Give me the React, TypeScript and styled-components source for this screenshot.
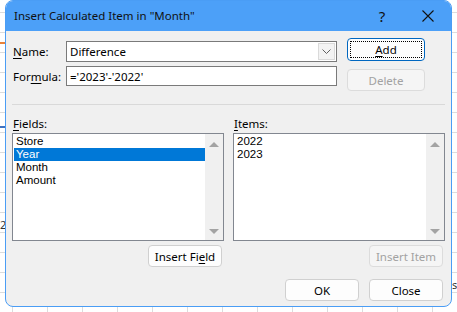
import React from "react";
import styled, { createGlobalStyle } from "styled-components";

const FONT = `"Noto Sans", "Open Sans", "Liberation Sans", sans-serif`;
const LIST_FONT = `"Liberation Sans", Arial, sans-serif`;

const GlobalStyle = createGlobalStyle`
  html, body { margin: 0; padding: 0; }
  body {
    width: 457px;
    height: 312px;
    overflow: hidden;
    font-family: ${FONT};
    font-size: 11.5px;
    color: #000;
  }
  * { box-sizing: border-box; }
`;

const Desktop = styled.div`
  position: relative;
  width: 457px;
  height: 312px;
  padding: 0 5px;
  background-color: #ffffff;
  background-image:
    linear-gradient(#dcdcdc 1px, transparent 1px),
    linear-gradient(90deg, #dcdcdc 1px, transparent 1px);
  background-size: 100% 20px, 35px 100%;
  background-position: 0 12px, 12px 0;
`;

const ChartStroke = styled.div<{ $color: string; $top: number }>`
  position: absolute;
  left: 0;
  top: ${(p) => p.$top}px;
  width: 6px;
  height: 2px;
  background: ${(p) => p.$color};
`;

const SheetText = styled.span<{ $left: number; $top: number }>`
  position: absolute;
  left: ${(p) => p.$left}px;
  top: ${(p) => p.$top}px;
  font-size: 11px;
  color: #333;
  line-height: 12px;
`;

const Dialog = styled.div`
  position: relative;
  width: 447px;
  height: 307px;
  border: 1px solid #4a9df5;
  border-radius: 8px;
  overflow: hidden;
  background: #f0f0f0;
  display: flex;
  flex-direction: column;
`;

const TitleBar = styled.div`
  height: 30px;
  flex: none;
  background: #4ca0f8;
  display: flex;
  align-items: center;
  padding-left: 8px;
  padding-bottom: 1px;
`;

const Title = styled.div`
  flex: 1;
  font-size: 11.5px;
  color: #111;
`;

const TitleButton = styled.div`
  width: 46px;
  height: 30px;
  display: flex;
  align-items: center;
  justify-content: center;
  color: #111;
  font-size: 15px;
`;

const Body = styled.div`
  flex: 1;
  display: flex;
  flex-direction: column;
  padding: 7px 6px 0 6px;
`;

const TopSection = styled.div`
  display: flex;
  align-items: flex-start;
  gap: 10px;
`;

const FieldGrid = styled.div`
  margin-top: 3px;
  display: grid;
  grid-template-columns: 54px 271px;
  grid-template-rows: 21px 20px;
  row-gap: 4px;
  align-items: center;
`;

const Label = styled.label`
  padding-left: 1px;
`;

const TextBox = styled.div`
  height: 100%;
  border: 1px solid #7a7a7a;
  background: #fff;
  display: flex;
  align-items: center;
  padding-left: 3px;
`;

const TextValue = styled.span`
  flex: 1;
`;

const ComboArrow = styled.div`
  width: 17px;
  height: 17px;
  margin-right: 1px;
  border: 1px solid #dadada;
  background: #f3f3f3;
  display: flex;
  align-items: center;
  justify-content: center;
`;

const ButtonColumn = styled.div`
  display: flex;
  flex-direction: column;
  gap: 8px;
`;

const Button = styled.div<{ $focused?: boolean; $disabled?: boolean; $w?: number; $h?: number }>`
  position: relative;
  width: ${(p) => p.$w ?? 74}px;
  height: ${(p) => p.$h ?? 22}px;
  border: 1px solid ${(p) => (p.$focused ? "#0067c0" : p.$disabled ? "#dcdcdc" : "#d0d0d0")};
  border-radius: 4px;
  background: ${(p) => (p.$disabled ? "#f5f5f5" : "#fdfdfd")};
  color: ${(p) => (p.$disabled ? "#a2a2a2" : "#000")};
  display: flex;
  align-items: center;
  justify-content: center;
  ${(p) =>
    p.$focused
      ? `&::after {
          content: "";
          position: absolute;
          inset: 2px;
          border: 1px dotted #000;
        }`
      : ""}
`;

const Separator = styled.div`
  margin-top: 13px;
  height: 1px;
  background: #d9d9d9;
`;

const ListsRow = styled.div`
  display: flex;
  gap: 9px;
`;

const ListColumn = styled.div`
  width: 212px;
  display: flex;
  flex-direction: column;
`;

const ListLabel = styled.div`
  margin-top: 12px;
  height: 16px;
  line-height: 14px;
  padding-left: 1px;
`;

const ListBox = styled.div`
  height: 108px;
  border: 1px solid #828790;
  background: #fff;
  display: flex;
`;

const ListContent = styled.div`
  flex: 1;
  padding: 1px 0 0 1px;
  font-family: ${LIST_FONT};
  font-size: 11.5px;
`;

const ListItem = styled.div<{ $selected?: boolean }>`
  height: 13px;
  line-height: 13px;
  padding-left: 2px;
  background: ${(p) => (p.$selected ? "#0078d7" : "transparent")};
  color: ${(p) => (p.$selected ? "#fff" : "#000")};
`;

const ScrollBar = styled.div`
  width: 18px;
  background: #f0f0f0;
  display: flex;
  flex-direction: column;
  justify-content: space-between;
  align-items: center;
  padding: 8px 0 6px;
`;

const Arrow = styled.div<{ $down?: boolean }>`
  width: 0;
  height: 0;
  border-left: 5px solid transparent;
  border-right: 5px solid transparent;
  ${(p) => (p.$down ? "border-top: 5px solid #a3a3a3;" : "border-bottom: 5px solid #a3a3a3;")}
`;

const ButtonRow = styled.div<{ $top: number }>`
  margin-top: ${(p) => p.$top}px;
  display: flex;
  justify-content: flex-end;
  gap: 10px;
  padding-right: 2px;
`;

const U = styled.span`
  text-decoration: underline;
  text-underline-offset: 2px;
`;

const Chevron = () => (
  <svg width="9" height="5" viewBox="0 0 9 5">
    <path d="M0.5 0.5 L4.5 4.5 L8.5 0.5" fill="none" stroke="#606060" strokeWidth="1" />
  </svg>
);

const CloseIcon = () => (
  <svg width="12" height="12" viewBox="0 0 12 12">
    <path d="M0.5 0.5 L11.5 11.5 M11.5 0.5 L0.5 11.5" stroke="#111" strokeWidth="1.1" />
  </svg>
);

export default function App() {
  return (
    <>
      <GlobalStyle />
      <Desktop>
        <ChartStroke $color="#e8823a" $top={42} />
        <ChartStroke $color="#3f72c0" $top={126} />
        <SheetText $left={0} $top={219}>2</SheetText>
        <SheetText $left={452} $top={279}>s</SheetText>
        <Dialog>
          <TitleBar>
            <Title>Insert Calculated Item in "Month"</Title>
            <TitleButton>?</TitleButton>
            <TitleButton>
              <CloseIcon />
            </TitleButton>
          </TitleBar>
          <Body>
            <TopSection>
              <FieldGrid>
                <Label>
                  <U>N</U>ame:
                </Label>
                <TextBox>
                  <TextValue>Difference</TextValue>
                  <ComboArrow>
                    <Chevron />
                  </ComboArrow>
                </TextBox>
                <Label>
                  For<U>m</U>ula:
                </Label>
                <TextBox>
                  <TextValue>='2023'-'2022'</TextValue>
                </TextBox>
              </FieldGrid>
              <ButtonColumn>
                <Button $focused $w={78} $h={23}>
                  <span>
                    <U>A</U>dd
                  </span>
                </Button>
                <Button $disabled $w={78} $h={22}>
                  Delete
                </Button>
              </ButtonColumn>
            </TopSection>
            <Separator />
            <ListsRow>
              <ListColumn>
                <ListLabel>
                  <U>F</U>ields:
                </ListLabel>
                <ListBox>
                  <ListContent>
                    <ListItem>Store</ListItem>
                    <ListItem $selected>Year</ListItem>
                    <ListItem>Month</ListItem>
                    <ListItem>Amount</ListItem>
                  </ListContent>
                  <ScrollBar>
                    <Arrow />
                    <Arrow $down />
                  </ScrollBar>
                </ListBox>
                <ButtonRow $top={4}>
                  <Button>
                    <span>
                      Insert Fi<U>e</U>ld
                    </span>
                  </Button>
                </ButtonRow>
              </ListColumn>
              <ListColumn>
                <ListLabel>
                  <U>I</U>tems:
                </ListLabel>
                <ListBox>
                  <ListContent>
                    <ListItem>2022</ListItem>
                    <ListItem>2023</ListItem>
                  </ListContent>
                  <ScrollBar>
                    <Arrow />
                    <Arrow $down />
                  </ScrollBar>
                </ListBox>
                <ButtonRow $top={4}>
                  <Button $disabled>Insert Item</Button>
                </ButtonRow>
              </ListColumn>
            </ListsRow>
            <ButtonRow $top={12}>
              <Button>OK</Button>
              <Button>Close</Button>
            </ButtonRow>
          </Body>
        </Dialog>
      </Desktop>
    </>
  );
}
